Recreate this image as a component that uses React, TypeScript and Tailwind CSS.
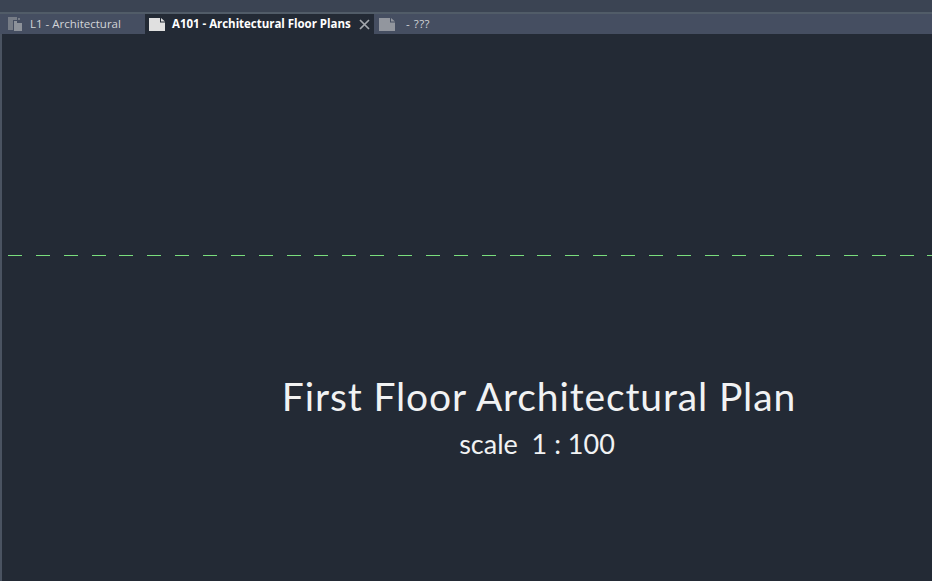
const Sheet = ({ fill }: { fill: string }) => (
  <svg width="16" height="13" viewBox="0 0 16 13" className="shrink-0">
    <path d="M0 0H11V4.5H16V13H0Z M12 0L16 3.5H12Z" fill={fill} />
  </svg>
);

const Views = () => (
  <svg width="14" height="14" viewBox="0 0 14 14" className="shrink-0">
    <path d="M0 0H9V3H5V13H0Z" fill="#767c86" />
    <path d="M10 1H12V3H10Z" fill="#767c86" />
    <path d="M6 4H9V6H14V14H6Z" fill="#8d929a" />
  </svg>
);

export default function App() {
  return (
    <div className="flex h-[581px] w-[932px] flex-col overflow-hidden bg-[#232a35] font-['Open_Sans',sans-serif]">
      <div className="h-3 bg-[#3b4453]" />
      <div className="h-0.5 bg-[#515c68]" />
      <div className="flex h-5 bg-[#454e61] pl-0.5 text-[11.5px]">
        <div className="flex w-[143px] items-center pl-1.5 text-[#d2d4d8]">
          <Views />
          <span className="ml-2">L1 - Architectural</span>
        </div>
        <div className="flex w-[229px] items-center bg-[#232a35] pl-1 font-bold text-white">
          <Sheet fill="#e0e0e0" />
          <span className="ml-[7px] tracking-[-0.03px] whitespace-nowrap">A101 - Architectural Floor Plans</span>
          <span className="mr-1 ml-auto text-[#a4a8ae]">
            <svg width="11" height="11" viewBox="0 0 11 11" stroke="currentColor" strokeWidth="1.7">
              <path d="M1 1L10 10M10 1L1 10" />
            </svg>
          </span>
        </div>
        <div className="flex items-center pl-[5px] text-[#d2d4d8]">
          <Sheet fill="#92969e" />
          <span className="ml-[11px] tracking-[0.5px]">- ???</span>
        </div>
      </div>
      <div className="flex min-h-0 flex-1 border-l-2 border-[#4a5361]">
        <div className="flex flex-1 flex-col">
          <svg className="mt-[220px] ml-1.5 h-[3px] w-[924px] shrink-0" shapeRendering="crispEdges">
            <line x1="0" y1="1.5" x2="924" y2="1.5" stroke="#7ade7d" strokeWidth="1" strokeDasharray="14 13.862" />
          </svg>
          <div className="mt-[113px] ml-[77px] flex w-[916px] flex-col items-center font-['Lato',sans-serif] text-[#f1f2f3]">
            <span className="ml-1 text-[39px] leading-[52px] tracking-[0.88px] whitespace-nowrap">First Floor Architectural Plan</span>
            <span className="mt-[3px] text-[27px] leading-[38px] whitespace-pre">scale  1 : 100</span>
          </div>
        </div>
      </div>
    </div>
  );
}
